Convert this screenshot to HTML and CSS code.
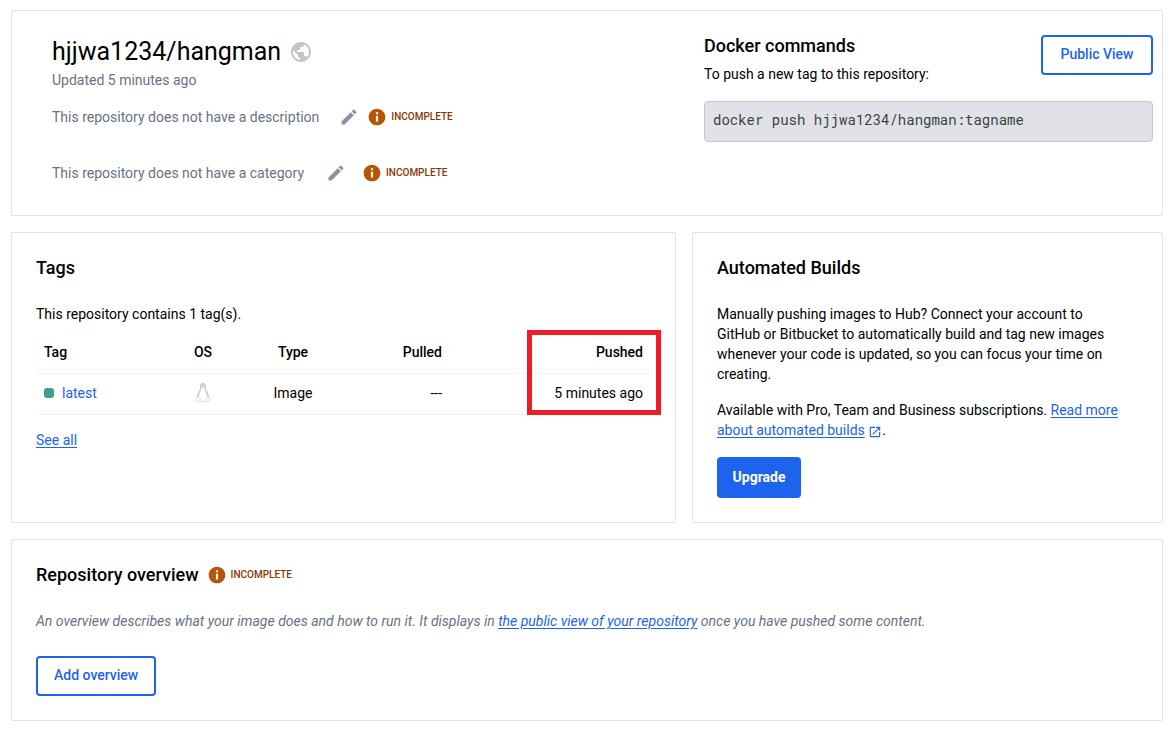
FILE: index.html
```html
<!DOCTYPE html>
<html lang="en">
<head>
<meta charset="utf-8">
<meta name="viewport" content="width=device-width, initial-scale=1">
<title>hjjwa1234/hangman</title>
<link rel="stylesheet" href="styles.css">
</head>
<body>
<svg class="defs" aria-hidden="true">
  <symbol id="pencil" viewBox="0 0 24 24"><path d="M3 17.25V21h3.75L17.81 9.94l-3.75-3.75L3 17.25zM20.71 7.04a1 1 0 0 0 0-1.41l-2.34-2.34a1 1 0 0 0-1.41 0l-1.83 1.83 3.75 3.75 1.83-1.83z"/></symbol>
  <symbol id="info" viewBox="0 0 24 24"><path d="M12 2C6.480 2 2 6.480 2 12s4.480 10 10 10 10-4.480 10-10S17.520 2 12 2zm1.300 15.500h-2.600v-7h2.600v7zm0-8.700h-2.600V6.300h2.600v2.500z"/></symbol>
</svg>
<main class="page">
  <section class="card summary">
    <div class="repo">
      <div class="repo-title">
        <h1 class="repo-name">hjjwa1234/hangman</h1>
        <svg class="globe" viewBox="0 0 24 24" role="img" aria-label="Public"><path d="M12 2C6.480 2 2 6.480 2 12s4.480 10 10 10 10-4.480 10-10S17.520 2 12 2zm-1 17.930c-3.950-.490-7-3.850-7-7.930 0-.620.080-1.210.210-1.790L9 15v1c0 1.100.900 2 2 2v1.930zm6.900-2.540c-.260-.810-1-1.390-1.900-1.390h-1v-3c0-.550-.450-1-1-1H8v-2h2c.550 0 1-.450 1-1V7h2c1.100 0 2-.900 2-2v-.410c2.930 1.190 5 4.060 5 7.410 0 2.080-.800 3.970-2.100 5.390z"/></svg>
      </div>
      <p class="muted">Updated 5 minutes ago</p>
      <div class="meta">
        <span class="muted">This repository does not have a description</span>
        <button class="edit" type="button" aria-label="Edit description"><svg class="pencil"><use href="#pencil"/></svg></button>
        <span class="status"><svg class="info"><use href="#info"/></svg>INCOMPLETE</span>
      </div>
      <div class="meta meta-category">
        <span class="muted">This repository does not have a category</span>
        <button class="edit" type="button" aria-label="Edit category"><svg class="pencil"><use href="#pencil"/></svg></button>
        <span class="status"><svg class="info"><use href="#info"/></svg>INCOMPLETE</span>
      </div>
    </div>
    <div class="commands">
      <div class="commands-head">
        <div>
          <h2 class="heading commands-title">Docker commands</h2>
          <p>To push a new tag to this repository:</p>
        </div>
        <button class="button" type="button">Public View</button>
      </div>
      <code class="command">docker push hjjwa1234/hangman:tagname</code>
    </div>
  </section>

  <div class="row">
    <section class="card panel">
      <h2 class="heading panel-title">Tags</h2>
      <p>This repository contains 1 tag(s).</p>
      <div class="table-wrap">
        <table class="tags">
          <thead>
            <tr><th class="col-tag">Tag</th><th class="col-os">OS</th><th class="col-type">Type</th><th class="col-pulled">Pulled</th><th class="col-pushed">Pushed</th></tr>
          </thead>
          <tbody>
            <tr>
              <td class="col-tag"><span class="tag"><span class="dot"></span><a class="tag-link" href="#">latest</a></span></td>
              <td class="col-os"><svg class="linux" viewBox="0 0 16 20" role="img" aria-label="Linux"><path fill="#c9c9c9" d="M8 0C5.800 0 4.800 1.500 5 4c.100 2-.300 3-1.600 5.200C2.300 11.200 1.600 13 1.500 15l3 3.500h7l3-3.500c-.100-2-.800-3.800-1.900-5.800C11.300 7 10.900 6 11 4c.200-2.500-.800-4-3-4z"/><path fill="#fff" d="M8 4.500c-1 0-1.700.500-1.700 1.500C5.800 8.500 4 11 3.800 13.500L5.700 18h4.600l1.900-4.500C12 11 10.200 8.500 9.700 6c0-1-.700-1.500-1.700-1.500z"/><path fill="#f7f7f7" stroke="#dedede" stroke-width=".7" d="M2.500 13.500.7 15.400.3 18l3.900 1.500 2.300-1.300-1.700-3.700zM13.500 13.500l1.800 1.900.4 2.600-3.900 1.500-2.300-1.300 1.700-3.700z"/><path fill="#f2f2f2" d="M6.300 2.500h1.200v1.300H6.300zM8.500 2.500h1.200v1.300H8.500z"/></svg></td>
              <td class="col-type">Image</td>
              <td class="col-pulled">---</td>
              <td class="col-pushed">5 minutes ago</td>
            </tr>
          </tbody>
        </table>
        <div class="highlight"></div>
      </div>
      <a class="link" href="#">See all</a>
    </section>

    <section class="card panel">
      <h2 class="heading panel-title">Automated Builds</h2>
      <p class="intro">Manually pushing images to Hub? Connect your account to GitHub or Bitbucket to automatically build and tag new images whenever your code is updated, so you can focus your time on creating.</p>
      <p class="plans">Available with Pro, Team and Business subscriptions. <a class="link" href="#">Read more about automated builds</a> <svg class="external" viewBox="0 0 24 24" aria-hidden="true"><path d="M19 19H5V5h7V3H5a2 2 0 0 0-2 2v14a2 2 0 0 0 2 2h14c1.100 0 2-.900 2-2v-7h-2v7zM14 3v2h3.590l-9.830 9.830 1.410 1.410L19 6.410V10h2V3h-7z"/></svg>.</p>
      <button class="button button-primary" type="button">Upgrade</button>
    </section>
  </div>

  <section class="card panel overview">
    <div class="overview-head">
      <h2 class="heading">Repository overview</h2>
      <span class="status"><svg class="info"><use href="#info"/></svg>INCOMPLETE</span>
    </div>
    <p class="muted overview-text">An overview describes what your image does and how to run it. It displays in <a class="link" href="#">the public view of your repository</a> once you have pushed some content.</p>
    <button class="button" type="button">Add overview</button>
  </section>
</main>
</body>
</html>
```
FILE: styles.css
```css
* { box-sizing: border-box; }

body {
  margin: 0;
  background: #fff;
  color: #000;
  font: 14px/20px Roboto, "Liberation Sans", sans-serif;
}

h1, h2, p { margin: 0; }
.defs { display: none; }

.page {
  display: flex;
  flex-direction: column;
  gap: 16px;
  padding: 10px 13px 15px 11px;
}

.card {
  border: 1px solid #e1e2e6;
  border-radius: 2px;
}

.muted { color: #677285; }
.heading { font-size: 18px; line-height: 24px; font-weight: 500; }
.link { color: #1d63ed; text-decoration: underline; text-underline-offset: 2px; }

/* Repository summary */
.summary {
  display: grid;
  grid-template-columns: 652fr 449fr;
  padding: 24px 9px 30px 40px;
}

.repo-title { display: flex; align-items: center; gap: 8px; height: 33px; }
.repo-name { font-size: 25px; line-height: 32px; font-weight: 400; }
.globe { width: 24px; height: 24px; fill: #c4c4c4; }
.repo .muted { line-height: 24px; }
.meta { display: flex; align-items: center; margin-top: 13px; height: 24px; }
.meta-category { margin-top: 32px; }

.edit {
  display: flex;
  margin: 0 8px 0 20px;
  padding: 0;
  border: 0;
  background: none;
}
.meta-category .edit { margin: 0 16px 0 22px; }
.pencil { width: 20px; height: 20px; fill: #8993a5; }

.status {
  display: inline-flex;
  align-items: center;
  gap: 4px;
  color: #873800;
  font-size: 10px;
  line-height: 20px;
  font-weight: 500;
}
.info { width: 20px; height: 20px; fill: #b85504; }

.commands-head { display: flex; justify-content: space-between; align-items: flex-start; }
.commands-title { margin-bottom: 7px; line-height: 22px; }

.button {
  height: 40px;
  min-width: 112px;
  padding: 0 16px 2px;
  border: 2px solid #1d63ed;
  border-radius: 4px;
  background: #fff;
  color: #1d63ed;
  font: 500 14px/20px Roboto, "Liberation Sans", sans-serif;
}
.button-primary {
  min-width: 84px;
  height: 41px;
  padding: 0 12px 2px;
  background: #1d63ed;
  color: #fff;
  font-weight: 700;
}

.command {
  display: block;
  margin-top: 17px;
  padding: 8px 8px 11px;
  border: 1px solid #c4c8d1;
  border-radius: 4px;
  background: #e1e2e6;
  color: #393f49;
  font: 14px/20px "Roboto Mono", "DejaVu Sans Mono", "Liberation Mono", monospace;
}

/* Tags and automated builds */
.row { display: grid; grid-template-columns: 665fr 471fr; gap: 16px; }
.panel { padding: 23px 24px 24px; }
.panel-title { margin-bottom: 24px; }

.table-wrap { position: relative; margin: 8px 0 15px; }
.tags { width: 100%; border-collapse: collapse; table-layout: fixed; }
.tags th, .tags td {
  height: 41px;
  padding: 0 8px;
  border-bottom: 1px solid #f2f2f4;
  text-align: left;
  font-weight: 400;
}
.tags th { font-weight: 500; }
.tags td { padding-bottom: 2px; }
.tags .col-tag { width: 122px; }
.tags .col-os { width: 90px; text-align: center; }
.tags .col-type { width: 90px; text-align: center; }
.tags .col-pulled { width: 112px; text-align: right; }
.tags .col-pushed { text-align: right; }

.tag { display: flex; align-items: center; gap: 8px; }
.dot { width: 10px; height: 10px; border-radius: 3px; background: #3ba08d; }
.tag-link { color: #1d63ed; text-decoration: none; }
.linux { display: block; width: 16px; height: 20px; margin: 0 auto; }

.highlight {
  position: absolute;
  top: -2px;
  right: -10px;
  bottom: 0;
  width: 134px;
  border: 5px solid #ee1c25;
}

.intro { padding-right: 16px; }
.plans { margin: 16px 0 17px; }
.external { width: 14px; height: 14px; fill: #1d63ed; vertical-align: -4px; }

/* Overview */
.overview-head { display: flex; align-items: center; gap: 8px; margin-bottom: 24px; }
.overview-text { font-style: italic; margin-bottom: 25px; }
```
